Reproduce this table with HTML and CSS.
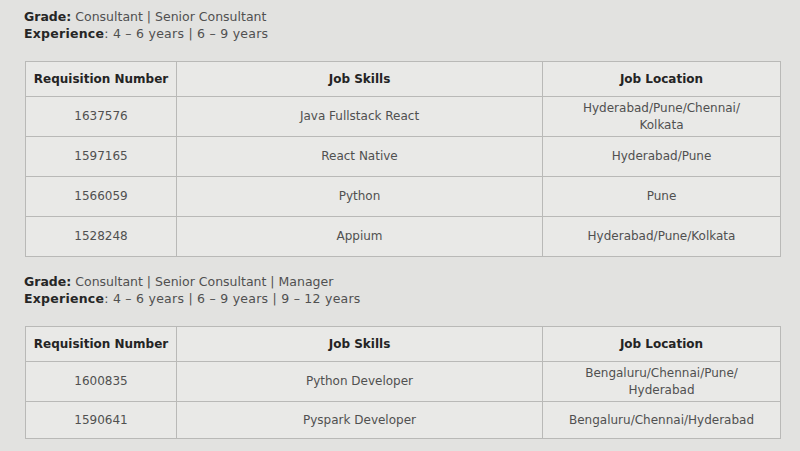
FILE: index.html
```html
<!DOCTYPE html>
<html>
<head>
<meta charset="utf-8">
<link rel="stylesheet" href="styles.css">
</head>
<body>
<div class="page">
  <div class="block">
    <div class="meta">
      <p><b>Grade:</b> Consultant | Senior Consultant</p>
      <p class="exp"><b>Experience</b>: 4 – 6 years | 6 – 9 years</p>
    </div>
    <table class="jobs">
      <colgroup><col class="c1"><col class="c2"><col class="c3"></colgroup>
      <tr class="head"><th>Requisition Number</th><th>Job Skills</th><th>Job Location</th></tr>
      <tr><td>1637576</td><td>Java Fullstack React</td><td>Hyderabad/Pune/Chennai/<br>Kolkata</td></tr>
      <tr><td>1597165</td><td>React Native</td><td>Hyderabad/Pune</td></tr>
      <tr><td>1566059</td><td>Python</td><td>Pune</td></tr>
      <tr><td>1528248</td><td>Appium</td><td>Hyderabad/Pune/Kolkata</td></tr>
    </table>
  </div>
  <div class="block second">
    <div class="meta">
      <p><b>Grade:</b> Consultant | Senior Consultant | Manager</p>
      <p class="exp"><b>Experience</b>: 4 – 6 years | 6 – 9 years | 9 – 12 years</p>
    </div>
    <table class="jobs">
      <colgroup><col class="c1"><col class="c2"><col class="c3"></colgroup>
      <tr class="head"><th>Requisition Number</th><th>Job Skills</th><th>Job Location</th></tr>
      <tr><td>1600835</td><td>Python Developer</td><td>Bengaluru/Chennai/Pune/<br>Hyderabad</td></tr>
      <tr class="short"><td>1590641</td><td>Pyspark Developer</td><td>Bengaluru/Chennai/Hyderabad</td></tr>
    </table>
  </div>
</div>
</body>
</html>
```
FILE: styles.css
```css
html, body {
  margin: 0;
  padding: 0;
}
body {
  background: #e2e2e0;
  font-family: "DejaVu Sans", Verdana, sans-serif;
  font-size: 12px;
  color: #505050;
  width: 800px;
  height: 451px;
  overflow: hidden;
}
.page {
  padding: 8px 0 0 24px;
  display: flex;
  flex-direction: column;
}
.meta p {
  margin: 0;
  line-height: 17px;
  font-size: 12.5px;
}
.meta p.exp {
  letter-spacing: 0.25px;
}
.meta b {
  color: #262626;
}
.jobs {
  margin-top: 19px;
  margin-left: 1px;
  width: 755px;
  border-collapse: collapse;
  table-layout: fixed;
  background: #e9e9e7;
}
.c1 { width: 151px; }
.c2 { width: 366px; }
.c3 { width: 238px; }
.jobs th, .jobs td {
  border: 1px solid #b9b9b7;
  text-align: center;
  vertical-align: middle;
  padding: 0 4px;
  line-height: 17px;
}
.jobs th {
  color: #242424;
  font-weight: bold;
  font-size: 12px;
  height: 34px;
}
.jobs td {
  height: 39px;
  font-size: 12px;
}
.jobs tr.short td {
  height: 36px;
}
.second {
  margin-top: 16px;
}
```
